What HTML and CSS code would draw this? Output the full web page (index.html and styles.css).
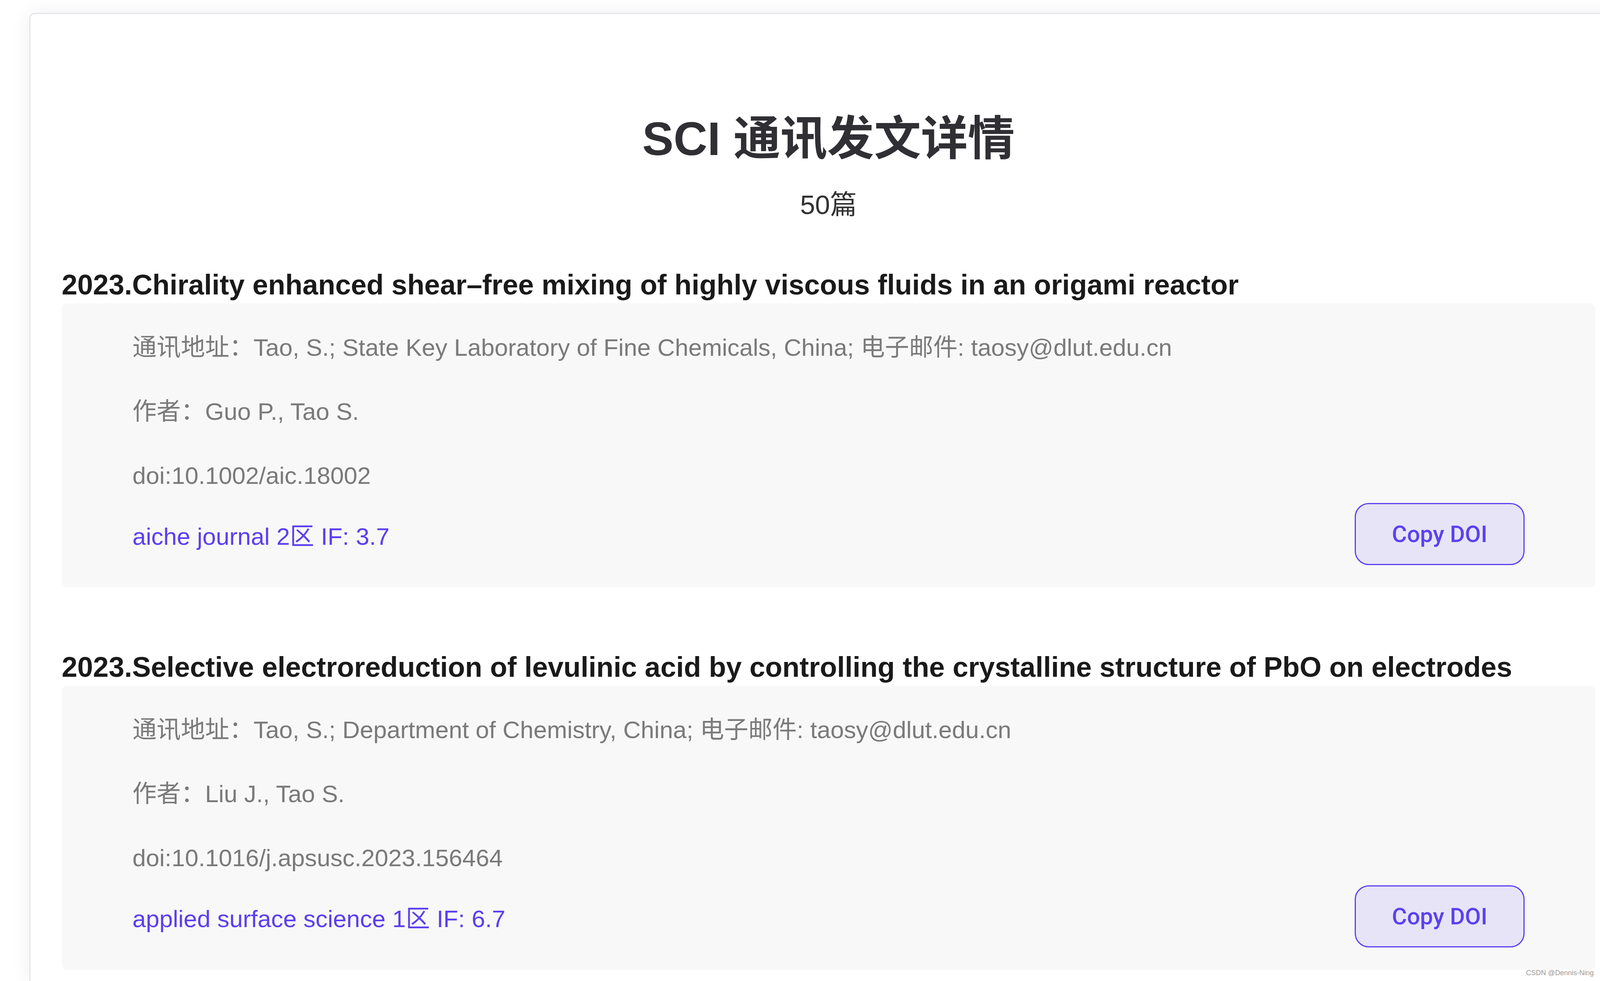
FILE: index.html
```html
<!doctype html>
<html>
	<head>
		<title>SCI 通讯发文详情</title>
		<meta charset="utf-8">
		<link rel="stylesheet" href="styles.css">
	</head>
	<body>
		<div class="card">
			<h1 class="title">SCI 通讯发文详情</h1>
			<div class="count">50篇</div>

			<div class="paper">
				<h2 class="paperTitle">2023.Chirality enhanced shear–free mixing of highly viscous fluids in an origami reactor</h2>
				<div class="paperBox">
					<p class="metaRow">通讯地址：Tao, S.; State Key Laboratory of Fine Chemicals, China; 电子邮件: taosy@dlut.edu.cn</p>
					<p class="metaRow">作者：Guo P., Tao S.</p>
					<p class="metaRow">doi:10.1002/aic.18002</p>
					<div class="journalRow">
						<span class="journal">aiche journal 2区 IF: 3.7</span>
						<button class="copyBtn">Copy DOI</button>
					</div>
				</div>
			</div>

			<div class="paper">
				<h2 class="paperTitle">2023.Selective electroreduction of levulinic acid by controlling the crystalline structure of PbO on electrodes</h2>
				<div class="paperBox">
					<p class="metaRow">通讯地址：Tao, S.; Department of Chemistry, China; 电子邮件: taosy@dlut.edu.cn</p>
					<p class="metaRow">作者：Liu J., Tao S.</p>
					<p class="metaRow">doi:10.1016/j.apsusc.2023.156464</p>
					<div class="journalRow">
						<span class="journal">applied surface science 1区 IF: 6.7</span>
						<button class="copyBtn">Copy DOI</button>
					</div>
				</div>
			</div>
		</div>
		<div class="watermark">CSDN @Dennis-Ning</div>
	</body>
</html>
```

FILE: styles.css
```css
html,body{
	margin:0px;
	padding:0px;
	height:2512px;
	overflow:hidden;
}
body{
	display:flow-root;		/** 防止卡片的margin塌陷到body外 **/
	position:relative;
	background:#fff;
	font-family:"Liberation Sans", "Noto Sans CJK SC", sans-serif;
}

/** 外层卡片, 下边缘在画面外 **/
.card{
	box-sizing:border-box;
	width:4092px;
	height:2479px;
	margin:33px 0 0 75px;
	padding:247px 80px 0;
	overflow:hidden;
	background:#fff;
	border:3px solid #e5e5ee;
	border-bottom:0;
	border-radius:14px 14px 0 0;
	box-shadow:0 0 50px rgba(0,0,0,0.07);
}

.title{
	margin:0;
	font-size:120px;
	line-height:144px;
	font-weight:bold;
	color:#303034;
	text-align:center;
}
.count{
	margin-top:48px;
	font-size:69px;
	line-height:99px;
	color:#333;
	text-align:center;
}

/** 每篇文章 **/
.paper{
	margin-top:107px;
}
.paper + .paper{
	margin-top:156px;
}
.paperTitle{
	margin:0;
	font-size:72px;
	line-height:96px;
	font-weight:bold;
	color:#1a1a1a;
	white-space:nowrap;
}
.paperBox{
	display:flex;
	flex-direction:column;
	padding:68px 181px 57px;
	background:#f8f8f8;
	border-radius:14px;
}
.metaRow{
	margin:0;
	font-size:62px;
	line-height:90px;
	color:#7a7a7a;
}
.metaRow + .metaRow{
	margin-top:74px;
}
.journalRow{
	display:flex;
	justify-content:space-between;
	align-items:center;
	margin-top:25px;
}
.journal{
	font-size:62px;
	color:#5b3ff0;
}
.copyBtn{
	box-sizing:border-box;
	width:435px;
	height:159px;
	padding:0;
	font-family:Roboto, "Liberation Sans", sans-serif;
	font-weight:500;
	font-size:59px;
	color:#5b41f0;
	background:#e7e4f8;
	border:3px solid #5b41f0;
	border-radius:36px;
}

.watermark{
	position:absolute;
	right:16px;
	bottom:10px;
	font-size:18px;
	color:#999;
}
```
